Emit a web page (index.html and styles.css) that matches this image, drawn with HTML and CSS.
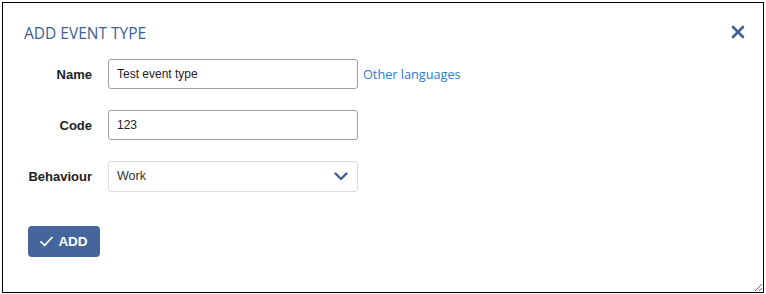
FILE: index.html
```html
<!DOCTYPE html>
<html>
<head>
<meta charset="utf-8">
<link rel="stylesheet" href="styles.css">
</head>
<body>
<div class="dialog">
  <h1 class="title">ADD EVENT TYPE</h1>
  <button class="close" aria-label="Close">
    <svg width="14" height="14" viewBox="0 0 14 14"><path d="M2 2 L12 12 M12 2 L2 12" stroke="#3d6193" stroke-width="2.6" stroke-linecap="round"/></svg>
  </button>
  <form class="form">
    <div class="row">
      <label class="label">Name</label>
      <div class="input">Test event type</div>
      <a class="link" href="#">Other languages</a>
    </div>
    <div class="row">
      <label class="label">Code</label>
      <div class="input">123</div>
    </div>
    <div class="row">
      <label class="label">Behaviour</label>
      <div class="input select">
        <span>Work</span>
        <svg width="14" height="9" viewBox="0 0 14 9"><path d="M1.5 1.5 L7 7 L12.5 1.5" fill="none" stroke="#3d6193" stroke-width="2.4" stroke-linecap="round" stroke-linejoin="round"/></svg>
      </div>
    </div>
    <div class="actions">
      <button type="button" class="btn">
        <svg width="13" height="11" viewBox="0 0 13 11"><path d="M1 5.8 L4.6 9.3 L12 1.5" fill="none" stroke="#fff" stroke-width="1.7" stroke-linecap="round" stroke-linejoin="round"/></svg>
        <span>ADD</span>
      </button>
    </div>
  </form>
</div>
</body>
</html>
```
FILE: styles.css
```css
html, body {
  margin: 0;
  padding: 0;
  background: #fff;
}
body {
  font-family: "Liberation Sans", Arial, sans-serif;
  color: #222;
}
.dialog {
  position: relative;
  box-sizing: border-box;
  margin: 2px;
  width: 762px;
  height: 291px;
  border: 1px solid #000;
  padding: 20px 0 0 21px;
  resize: both;
  overflow: hidden;
}
.title {
  margin: 0;
  font-family: "Open Sans", sans-serif;
  font-weight: 500;
  font-size: 15.5px;
  line-height: 20px;
  color: #3d6193;
}
.close {
  position: absolute;
  top: 19px;
  right: 15px;
  width: 20px;
  height: 20px;
  padding: 0;
  border: 0;
  background: none;
  display: flex;
  align-items: center;
  justify-content: center;
}
.form {
  margin-top: 16px;
  padding-left: 4px;
  display: flex;
  flex-direction: column;
  gap: 21px;
}
.row {
  display: flex;
  align-items: center;
  height: 30px;
}
.label {
  width: 64px;
  margin-right: 16px;
  text-align: right;
  font-weight: bold;
  font-size: 13px;
  color: #222;
}
.input {
  box-sizing: border-box;
  width: 250px;
  height: 30px;
  border: 1px solid #a0a0a0;
  border-radius: 3px;
  padding: 0 8px;
  font-size: 12px;
  color: #222;
  display: flex;
  align-items: center;
}
.select {
  height: 31px;
  border-color: #dcdcdc;
  justify-content: space-between;
  padding-right: 9px;
  color: #333;
  font-size: 12.5px;
}
.link {
  margin-left: 5px;
  font-family: "Open Sans", sans-serif;
  font-size: 12.7px;
  color: #2a7bcf;
  text-decoration: none;
}
.actions {
  margin-top: 14px;
}
.btn {
  box-sizing: border-box;
  width: 72px;
  height: 31px;
  border: 0;
  border-radius: 4px;
  background: #44669a;
  color: #fff;
  display: flex;
  align-items: center;
  justify-content: center;
  gap: 5px;
  padding: 0 0 0 0;
  font-family: "Liberation Sans", Arial, sans-serif;
  font-weight: bold;
  font-size: 13.5px;
}
```
